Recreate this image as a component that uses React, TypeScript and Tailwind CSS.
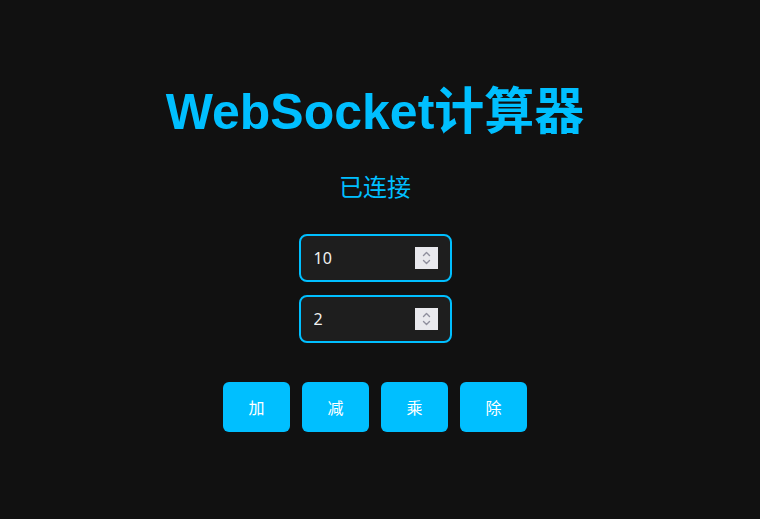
import React, { useState } from "react";

function Spinner() {
  return (
    <div className="flex h-[22px] w-[23px] shrink-0 flex-col items-center justify-center bg-[#e9e9ed]">
      <svg width="11" height="18" viewBox="0 0 11 18" fill="none" stroke="#8f8f9d" strokeWidth="1.4" strokeLinecap="round" strokeLinejoin="round">
        <path d="M2.5 6.5 L5.5 3.5 L8.5 6.5" />
        <path d="M2.5 11.5 L5.5 14.5 L8.5 11.5" />
      </svg>
    </div>
  );
}

function NumberField({ value, onChange }: { value: string; onChange: (v: string) => void }) {
  return (
    <div className="flex h-[48px] w-[153px] items-center rounded-[8px] border-2 border-[#00bfff] bg-[#1e1e1e] pl-[13px] pr-[12px]">
      <input
        type="number"
        value={value}
        onChange={(e) => onChange(e.target.value)}
        className="w-0 min-w-0 flex-1 bg-transparent font-['Noto_Sans','Open_Sans',sans-serif] text-[16px] text-[#f0f0f0] outline-none [appearance:textfield] [&::-webkit-inner-spin-button]:appearance-none [&::-webkit-outer-spin-button]:appearance-none"
      />
      <Spinner />
    </div>
  );
}

const ops = ["加", "减", "乘", "除"];

export default function App() {
  const [a, setA] = useState("10");
  const [b, setB] = useState("2");

  return (
    <div className="flex min-h-[519px] w-full flex-col items-center bg-[#111111] pr-[10px] pt-[86px] font-['Noto_Sans','Noto_Sans_CJK_SC',sans-serif]">
      <h1 className="font-['Liberation_Sans',Arial,'Noto_Sans_CJK_SC',sans-serif] text-[50px] font-bold leading-[52px] text-[#00bfff]">
        WebSocket计算器
      </h1>
      <p className="mt-[33px] font-['Noto_Sans_CJK_SC',sans-serif] text-[24px] leading-[30px] text-[#00bfff]">
        已连接
      </p>
      <div className="mt-[33px] flex flex-col gap-[13px]">
        <NumberField value={a} onChange={setA} />
        <NumberField value={b} onChange={setB} />
      </div>
      <div className="mt-[39px] flex gap-[12px]">
        {ops.map((op) => (
          <button
            key={op}
            className="h-[50px] w-[67px] rounded-[6px] bg-[#00bfff] font-['Noto_Sans_CJK_SC',sans-serif] text-[16px] text-white"
          >
            {op}
          </button>
        ))}
      </div>
    </div>
  );
}
